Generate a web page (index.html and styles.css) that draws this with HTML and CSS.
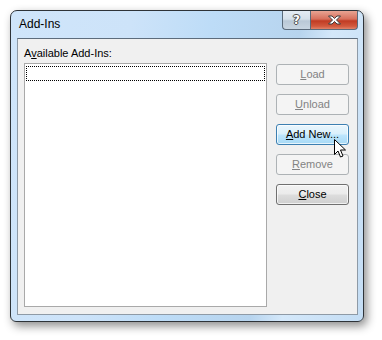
FILE: index.html
```html
<!DOCTYPE html>
<html>
<head>
<meta charset="utf-8">
<link rel="stylesheet" href="styles.css">
</head>
<body>
<div class="stage">
  <div class="window">
    <div class="titlebar">
      <span class="title">Add-Ins</span>
      <div class="caption">
        <div class="cap-btn help"><span>?</span></div>
        <div class="cap-btn close">
          <svg width="15" height="10" viewBox="0 0 15 10"><path d="M1.5 1 L5 1 L7.5 3.4 L10 1 L13.5 1 L9.5 5 L13.5 9 L10 9 L7.5 6.6 L5 9 L1.5 9 L5.5 5 Z" fill="#fff" stroke="#3a3a3a" stroke-width="1" stroke-linejoin="round"/></svg>
        </div>
      </div>
    </div>
    <div class="client">
      <div class="left">
        <div class="label">A<u>v</u>ailable Add-Ins:</div>
        <div class="listbox"><div class="item"></div></div>
      </div>
      <div class="buttons">
        <div class="btn disabled"><u>L</u>oad</div>
        <div class="btn disabled"><u>U</u>nload</div>
        <div class="btn hot"><u>A</u>dd New...</div>
        <div class="btn disabled"><u>R</u>emove</div>
        <div class="btn"><u>C</u>lose</div>
      </div>
    </div>
  </div>
  <svg class="cursor" width="13" height="20" viewBox="0 0 13 20"><path d="M0.5 0.5 L0.5 15.5 L4 12 L6.5 18 L9 17 L6.5 11 L11.5 11 Z" fill="#fff" stroke="#000" stroke-width="1" stroke-linejoin="miter"/></svg>
</div>
</body>
</html>
```

FILE: styles.css
```css
html, body {
  margin: 0;
  padding: 0;
  background: #ffffff;
}
.stage {
  position: relative;
  width: 382px;
  height: 340px;
  padding: 10px 0 0 10px;
  box-sizing: border-box;
  font-family: "Liberation Sans", Arial, sans-serif;
  font-size: 11px;
  color: #000;
}
.window {
  width: 354px;
  height: 312px;
  box-sizing: border-box;
  border: 1px solid #2e3338;
  border-radius: 7px 7px 6px 6px;
  background: linear-gradient(100deg, #cfe5fa 0%, #cde3f9 30%, #bddcf7 50%, #b7d4ee 72%, #d4e8fa 80%, #c4ddf4 100%);
  box-shadow: 3px 4px 10px rgba(0,0,0,0.45);
  display: flex;
  flex-direction: column;
}
.titlebar {
  height: 27px;
  display: flex;
  align-items: flex-start;
  justify-content: space-between;
  padding: 0 5px 0 8px;
}
.title {
  margin-top: 6px;
  font-size: 12px;
  line-height: 15px;
  color: #000;
}
.caption {
  display: flex;
}
.cap-btn {
  height: 19px;
  box-sizing: border-box;
  display: flex;
  align-items: center;
  justify-content: center;
  border: 1px solid #5a6a7a;
  border-top: none;
}
.help {
  width: 28px;
  border-radius: 0 0 0 4px;
  border-right: none;
  background: linear-gradient(180deg, #e4ecf4 0%, #d5e0ea 45%, #b9c8d6 55%, #c8d5e1 100%);
}
.help span {
  font-family: "DejaVu Sans", sans-serif;
  font-weight: bold;
  font-size: 12px;
  color: #fff;
  text-shadow: 0 0 1px #333, 1px 0 0 #555, -1px 0 0 #555, 0 1px 0 #555, 0 -1px 0 #555;
}
.close {
  width: 48px;
  border-radius: 0 0 4px 0;
  background: linear-gradient(180deg, #e8a493 0%, #d7705c 45%, #c13b23 55%, #d25a3e 85%, #e2836a 100%);
}
.client {
  flex: 1;
  margin: 0 5px 6px 6px;
  border: 1px solid #8e9aa6;
  border-top-color: #5d6c7c;
  background: #f0f0f0;
  display: flex;
  padding: 7px 8px 7px 6px;
  gap: 9px;
}
.left {
  width: 243px;
  display: flex;
  flex-direction: column;
}
.label {
  line-height: 15px;
  height: 15px;
  margin-bottom: 2px;
}
.listbox {
  flex: 1;
  background: #fff;
  border: 1px solid #a9a9a9;
  padding: 2px 1px;
}
.item {
  height: 13px;
  border: 1px dotted #000;
}
.buttons {
  width: 73px;
  margin-top: 18px;
  display: flex;
  flex-direction: column;
  gap: 9px;
}
.btn {
  height: 21px;
  box-sizing: border-box;
  border: 1px solid #707070;
  border-radius: 3px;
  background: linear-gradient(180deg, #f2f2f2 0%, #ebebeb 48%, #dddddd 52%, #cfcfcf 100%);
  display: flex;
  align-items: center;
  justify-content: center;
  line-height: 15px;
  box-shadow: inset 0 0 0 1px rgba(255,255,255,0.7);
}
.btn.disabled {
  border-color: #adb2b5;
  background: #f4f4f4;
  color: #838383;
  box-shadow: none;
}
.btn.hot {
  border-color: #3c7fb1;
  background: linear-gradient(180deg, #eaf6fd 0%, #d9f0fc 48%, #bee6fd 52%, #a7d9f5 100%);
}
.cursor {
  position: absolute;
  left: 334px;
  top: 139px;
}
```
